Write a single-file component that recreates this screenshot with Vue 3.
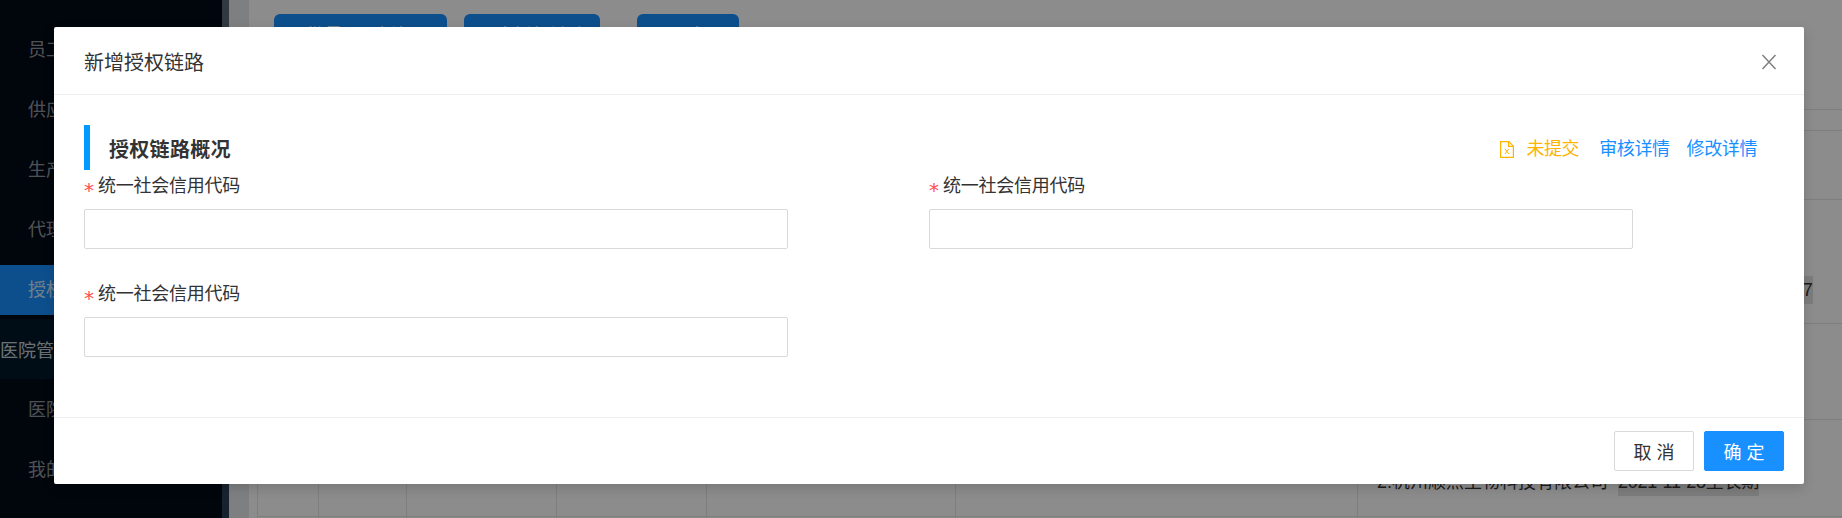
<script setup>
const menu = [
  { label: '员工管理' },
  { label: '供应商管理' },
  { label: '生产企业管理' },
  { label: '代理商管理' },
  { label: '授权链路管理', active: true },
  { label: '医院管理', group: true },
  { label: '医院列表' },
  { label: '我的医院' }
]

const actions = ['批量导入授权', '导出授权链路', '导出']

// only the last column shows from behind the dialog
const rows = [
  { height: 21, lines: [] },
  { height: 69, lines: [] },
  {
    height: 124,
    lines: [
      { name: '1.杭州顺点生物科技有限公司', date: '2021-11-28至长期' },
      { name: '2.杭州顺点生物科技有限公司', date: '2021-11-28至长期' },
      { name: '3.杭州顺点生物科技有限公司', date: '2020-12-01至2021-11-27' }
    ]
  },
  { height: 96, lines: [] },
  {
    height: 97,
    lines: [
      { name: '1.杭州顺点生物科技有限公司', date: '2021-11-28至长期' },
      { name: '2.杭州顺点生物科技有限公司', date: '2021-11-28至长期' }
    ]
  },
  { height: 40, lines: [] }
]

const fields = ['统一社会信用代码', '统一社会信用代码', '统一社会信用代码']
</script>

<template>
  <div class="page">
    <aside class="sidebar">
      <div
        v-for="item in menu"
        :key="item.label"
        class="menu-item"
        :class="{ active: item.active, group: item.group }"
      >
        {{ item.label }}
      </div>
    </aside>
    <div class="sidebar-edge"></div>
    <main class="main">
      <div class="content">
        <div class="toolbar">
          <button v-for="a in actions" :key="a" class="tool-btn">{{ a }}</button>
        </div>
        <div class="table">
          <div
            v-for="(row, i) in rows"
            :key="i"
            class="row"
            :style="{ height: row.height + 'px' }"
          >
            <div v-for="n in 6" :key="n" class="cell"></div>
            <div class="cell last">
              <div v-for="(line, j) in row.lines" :key="j" class="line">
                {{ line.name }}<span class="date">{{ line.date }}</span>
              </div>
            </div>
          </div>
        </div>
      </div>
    </main>

    <div class="mask">
      <div class="modal">
        <header class="modal-header">
          <span class="modal-title">新增授权链路</span>
          <button class="close-btn">
            <svg width="16" height="16" viewBox="0 0 16 16" fill="none" stroke="#808080" stroke-width="1.5">
              <path d="M1.5 1 14.5 15M14.5 1 1.5 15" />
            </svg>
          </button>
        </header>

        <div class="modal-body">
          <div class="section">
            <span class="section-bar"></span>
            <h3 class="section-title">授权链路概况</h3>
            <div class="section-links">
              <span class="status">
                <svg width="14" height="17" viewBox="0 0 14 17" fill="none" stroke="#ffb400" stroke-width="1.2">
                  <path d="M.6.6h8.2l4.6 4.6v11.2H.6z" />
                  <path d="M8.6.6v4.8h4.8" />
                  <path d="M4.9 7.8 8.9 13M8.9 7.8 4.9 13" stroke-width="1" />
                </svg>
                未提交
              </span>
              <a class="link">审核详情</a>
              <a class="link">修改详情</a>
            </div>
          </div>

          <div class="form">
            <div v-for="(f, i) in fields" :key="i" class="field">
              <label class="field-label"><span class="star">*</span>{{ f }}</label>
              <input class="field-input" type="text" />
            </div>
          </div>
        </div>

        <footer class="modal-footer">
          <button class="btn">取 消</button>
          <button class="btn primary">确 定</button>
        </footer>
      </div>
    </div>
  </div>
</template>

<style scoped>
.page {
  position: relative;
  display: flex;
  width: 1842px;
  height: 518px;
  overflow: hidden;
  font-family: "Liberation Sans", "Noto Sans CJK SC", sans-serif;
  font-size: 18px;
  color: #333;
}

.sidebar {
  width: 222px;
  flex-shrink: 0;
  padding-top: 25px;
  box-sizing: border-box;
  background: #020b19;
}

.menu-item {
  height: 50px;
  line-height: 50px;
  margin-bottom: 10px;
  padding-left: 28px;
  color: rgba(255, 255, 255, 0.58);
  white-space: nowrap;
}

.menu-item.active {
  margin-top: 0;
  margin-bottom: 4px;
  background: #1890ff;
  color: rgba(255, 255, 255, 0.8);
}

.menu-item.group {
  height: 60px;
  line-height: 64px;
  margin-bottom: 6px;
  padding-left: 0;
  background: #00192b;
  color: rgba(255, 255, 255, 0.8);
}

.sidebar-edge {
  width: 7px;
  flex-shrink: 0;
  background: linear-gradient(#5a6a76, #283e54);
}

.main {
  flex: 1;
  min-width: 0;
  padding-left: 20px;
  background: #e4e7eb;
}

.content {
  height: 100%;
  background: #fff;
}

.toolbar {
  display: flex;
  height: 109px;
  padding: 14px 0 0 25px;
  box-sizing: border-box;
  gap: 17px;
}

.tool-btn {
  width: 173px;
  height: 40px;
  border: none;
  border-radius: 6px;
  background: #1890ff;
  color: #fff;
  font: inherit;
}

.tool-btn:nth-child(2) {
  width: 136px;
}

.tool-btn:nth-child(3) {
  width: 102px;
  margin-left: 20px;
}

.table {
  margin-left: 8px;
}

.row {
  display: grid;
  grid-template-columns: 61px 88px 150px 150px 249px 402px 1fr;
  box-sizing: border-box;
  border-top: 1px solid #e6e6e6;
}

.cell {
  border-left: 1px solid #e6e6e6;
}

.cell.last {
  display: flex;
  flex-direction: column;
  justify-content: center;
  padding-left: 19px;
}

.line {
  height: 28px;
  line-height: 28px;
  white-space: nowrap;
}

.date {
  display: inline-block;
  margin-left: 10px;
  background: #e2e2e2;
  letter-spacing: -0.3px;
}

.mask {
  position: absolute;
  inset: 0;
  background: rgba(0, 0, 0, 0.45);
}

.modal {
  position: absolute;
  top: 27px;
  left: 54px;
  width: 1750px;
  background: #fff;
  border-radius: 2px;
  box-shadow: 0 4px 12px rgba(0, 0, 0, 0.15);
}

.modal-header {
  display: flex;
  align-items: center;
  justify-content: space-between;
  height: 68px;
  padding: 2px 27px 0 30px;
  box-sizing: border-box;
  border-bottom: 1px solid #eee;
}

.modal-title {
  font-size: 20px;
}

.close-btn {
  display: flex;
  padding: 0;
  border: none;
  background: none;
}

.modal-body {
  padding: 30px 47px 60px 30px;
}

.section {
  display: flex;
  height: 45px;
}

.section-bar {
  width: 6px;
  background: #0099ff;
}

.section-title {
  margin: 0 0 0 19px;
  font-size: 20px;
  font-weight: 700;
  line-height: 50px;
  letter-spacing: 0.3px;
}

.section-links {
  display: flex;
  align-items: center;
  margin-left: auto;
  padding-top: 3px;
  gap: 17px;
  line-height: 1;
  letter-spacing: -0.4px;
}

.status {
  display: flex;
  align-items: center;
  gap: 12px;
  margin-right: 3px;
  color: #ffb400;
}

.link {
  color: #1890ff;
}

.form {
  display: grid;
  grid-template-columns: 704px 704px;
  column-gap: 141px;
  row-gap: 29px;
}

.field-label {
  display: block;
  height: 39px;
  line-height: 33px;
  letter-spacing: -0.25px;
}

.star {
  display: inline-block;
  width: 14px;
  color: #ff4d4f;
  font-family: "DejaVu Sans", sans-serif;
  font-size: 20px;
  line-height: 20px;
  vertical-align: -5px;
}

.field-input {
  display: block;
  width: 100%;
  height: 40px;
  box-sizing: border-box;
  border: 1px solid #d9d9d9;
  border-radius: 2px;
  outline: none;
}

.modal-footer {
  display: flex;
  justify-content: flex-end;
  gap: 10px;
  padding: 13px 20px;
  border-top: 1px solid #eee;
}

.btn {
  width: 80px;
  height: 40px;
  border: 1px solid #d9d9d9;
  border-radius: 2px;
  background: #fff;
  color: #333;
  font: inherit;
}

.btn.primary {
  border-color: #1890ff;
  background: #1890ff;
  color: #fff;
}
</style>

<style>
html,
body {
  margin: 0;
  overflow: hidden;
}
</style>
